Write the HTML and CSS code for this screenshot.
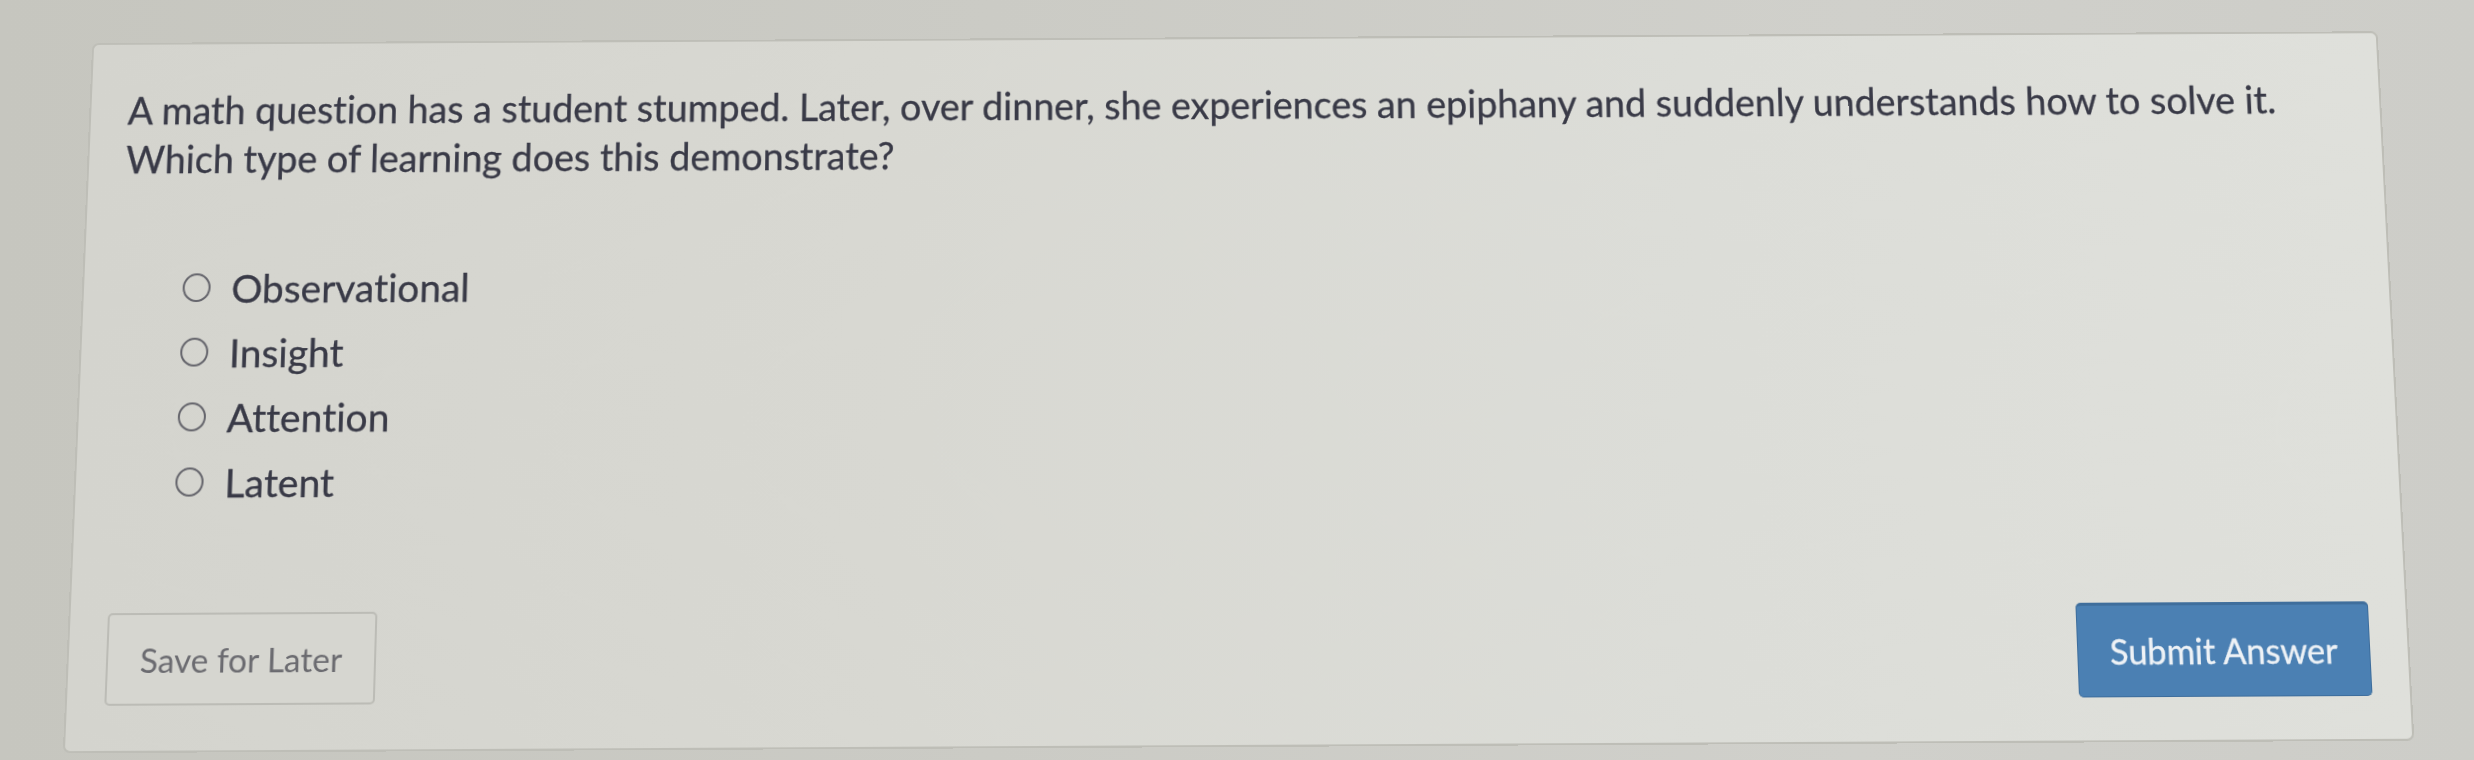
FILE: index.html
```html
<!DOCTYPE html>
<html lang="en">
<head>
<meta charset="utf-8">
<title>Quiz question</title>
<link rel="stylesheet" href="styles.css">
</head>
<body>
<main class="page">
  <section class="card">
    <div class="question">
      <p class="prompt">A math question has a student stumped. Later, over dinner, she experiences an epiphany and suddenly understands how to solve it.<br>Which type of learning does this demonstrate?</p>
      <ul class="options">
        <li class="option"><span class="radio"></span><span class="label">Observational</span></li>
        <li class="option"><span class="radio"></span><span class="label">Insight</span></li>
        <li class="option"><span class="radio"></span><span class="label">Attention</span></li>
        <li class="option"><span class="radio"></span><span class="label">Latent</span></li>
      </ul>
    </div>
    <div class="actions">
      <button class="btn btn-save" type="button">Save for Later</button>
      <button class="btn btn-submit" type="button">Submit Answer</button>
    </div>
  </section>
</main>
</body>
</html>
```

FILE: styles.css
```css
html, body {
  margin: 0;
  padding: 0;
}
body {
  width: 2474px;
  height: 760px;
  overflow: hidden;
  background: linear-gradient(90deg, #c6c6bf 0%, #cbcbc5 40%, #d0d0cb 75%, #cdcdc8 100%);
  font-family: Lato, "Open Sans", "Liberation Sans", sans-serif;
  font-variant-ligatures: none;
}
.page {
  padding: 31px 0 0 78px;
}
.card {
  box-sizing: border-box;
  width: 2318px;
  height: 712px;
  padding: 42px 37px 38px 37px;
  display: flex;
  flex-direction: column;
  justify-content: space-between;
  background: linear-gradient(90deg, #d4d4ce 0%, #d8d8d2 35%, #dcddd8 70%, #dfe0db 100%);
  border: 2px solid #bebeb7;
  border-radius: 7px;
  transform: perspective(2000px) rotateX(4.6deg) rotate(-0.3deg);
  transform-origin: 50% 50%;
}
.prompt {
  margin: 0;
  font-size: 38px;
  line-height: 50px;
  color: #393a47;
  -webkit-text-stroke: 0.3px #393a47;
}
.options {
  list-style: none;
  margin: 74px 0 0 62px;
  padding: 0;
}
.option {
  display: flex;
  align-items: center;
  height: 65px;
  font-size: 39px;
  color: #393a47;
  -webkit-text-stroke: 0.3px #393a47;
}
.radio {
  box-sizing: border-box;
  width: 28px;
  height: 29px;
  border: 2.5px solid #65656c;
  border-radius: 50%;
  margin-right: 21px;
  flex: none;
}
.actions {
  display: flex;
  justify-content: space-between;
  align-items: center;
}
.btn {
  font-family: Lato, "Open Sans", "Liberation Sans", sans-serif;
  font-variant-ligatures: none;
  border-radius: 5px;
  cursor: pointer;
  box-sizing: border-box;
  display: flex;
  align-items: center;
  justify-content: center;
}
.btn-save {
  width: 267px;
  height: 91px;
  margin-bottom: 6px;
  font-size: 33px;
  background: #d6d6d0;
  border: 2px solid #bcbcb6;
  color: #6b6b70;
}
.btn-submit {
  width: 290px;
  height: 93px;
  margin-top: -4px;
  font-size: 34px;
  background: #4b80b3;
  border: 1px solid #3d6d9c;
  border-top: 3px solid #3f6e9c;
  color: #eef2f6;
  -webkit-text-stroke: 0.3px #eef2f6;
}
```
